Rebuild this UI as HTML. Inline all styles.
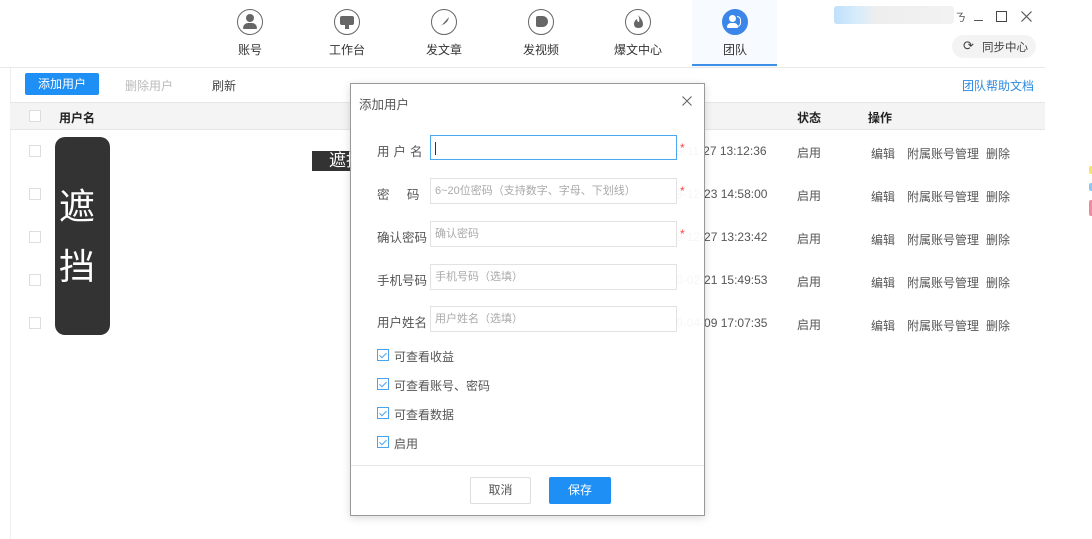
<!DOCTYPE html>
<html><head><meta charset="utf-8"><style>
*{margin:0;padding:0;box-sizing:border-box}
body{width:1092px;height:539px;overflow:hidden;background:#fff;font-family:"Liberation Sans","Noto Sans CJK SC",sans-serif;font-size:12px;color:#555;position:relative}
.a{position:absolute;white-space:nowrap}
.nav{position:absolute;top:0;width:86px;height:67px;text-align:center}
.nav .ic{width:26px;height:26px;border:1.5px solid #666;border-radius:50%;margin:9px auto 0;position:relative}
.nav .lb{margin-top:6px;color:#333;font-size:12px}
.cb{position:absolute;width:12px;height:12px;border:1px solid #ddd;background:#fff}
.row{position:absolute;left:10px;width:1035px;height:43px}
.mcb{position:absolute;width:12px;height:12px;border:1px solid #4aa3ef;background:#fff}
.mcb:after{content:"";position:absolute;left:3px;top:1px;width:3px;height:6px;border:solid #4aa3ef;border-width:0 1px 1px 0;transform:rotate(45deg)}
.inp{position:absolute;left:430px;width:247px;height:26px;border:1px solid #e2e2e2;color:#aaa;font-size:11px;padding:6px 4px;line-height:13px;background:#fff}
.star{position:absolute;left:680px;color:#f44;font-size:12px}
</style></head><body>
<div class="a" style="left:692px;top:0;width:85px;height:67px;background:#f7fbff"></div>
<div class="a" style="left:692px;top:64px;width:85px;height:2px;background:#3d8fe6"></div>
<div class="nav" style="left:207px"><div class="ic"><div class="a" style="left:8px;top:4px;width:8px;height:8px;border-radius:50%;background:#666"></div><div class="a" style="left:5px;top:13px;width:14px;height:6px;border-radius:5px 5px 1px 1px;background:#666"></div></div><div class="lb">账号</div></div>
<div class="nav" style="left:304px"><div class="ic"><div class="a" style="left:5px;top:6px;width:14px;height:9px;border-radius:2px;background:#666"></div><div class="a" style="left:10px;top:15px;width:4px;height:4px;background:#666"></div></div><div class="lb">工作台</div></div>
<div class="nav" style="left:401px"><div class="ic"><svg class="a" style="left:6px;top:5px" width="13" height="13"><path d="M2 12 L11 2 Q10 8 4 10 Z" fill="#666"/></svg></div><div class="lb">发文章</div></div>
<div class="nav" style="left:498px"><div class="ic"><div class="a" style="left:7px;top:6px;width:12px;height:11px;border-radius:2px 6px 6px 2px;background:#666"></div></div><div class="lb">发视频</div></div>
<div class="nav" style="left:595px"><div class="ic"><svg class="a" style="left:6px;top:4px" width="13" height="15"><path d="M6 1 Q11 6 11 10 Q11 14 6.5 14 Q2 14 2 10 Q2 7 5 5 Q5 8 7 8 Q8 5 6 1Z" fill="#666"/></svg></div><div class="lb">爆文中心</div></div>
<div class="nav" style="left:692px"><div class="ic" style="background:#3b86e8;border-color:#3b86e8"><div class="a" style="left:6px;top:5px;width:7px;height:7px;border-radius:50%;background:#fff"></div><div class="a" style="left:4px;top:13px;width:11px;height:5px;border-radius:4px 4px 1px 1px;background:#fff"></div><div class="a" style="left:14px;top:6px;width:4px;height:11px;border:1.5px solid #fff;border-left:none;border-radius:0 4px 4px 0"></div></div><div class="lb">团队</div></div>
<div class="a" style="left:834px;top:6px;width:120px;height:18px;background:linear-gradient(90deg,#bfe0fb 0,#d8ecfb 20%,#eee 35%,#f2f2f2 100%);border-radius:3px"></div>
<div class="a" style="left:955px;top:9px;color:#555;font-size:11px">ㄋ</div>
<div class="a" style="left:974px;top:20px;width:9px;height:1px;background:#555"></div>
<div class="a" style="left:996px;top:11px;width:11px;height:11px;border:1px solid #444"></div>
<svg class="a" style="left:1021px;top:11px" width="11" height="11"><path d="M0.5 0.5L10.5 10.5M10.5 0.5L0.5 10.5" stroke="#555" stroke-width="1.2"/></svg>
<div class="a" style="left:952px;top:35px;width:84px;height:23px;border-radius:12px;background:#f3f3f3"></div>
<div class="a" style="left:963px;top:38px;font-size:13px;color:#444">⟳</div>
<div class="a" style="left:982px;top:39px;color:#444;font-size:11.5px">同步中心</div>
<div class="a" style="left:0;top:67px;width:1045px;height:1px;background:#e8e8e8"></div>
<div class="a" style="left:10px;top:68px;width:1px;height:471px;background:#eee"></div>
<div class="a" style="left:25px;top:73px;width:74px;height:22px;background:#1e8ff5;border-radius:2px;color:#fff;text-align:center;line-height:22px">添加用户</div>
<div class="a" style="left:125px;top:77px;color:#bbb">删除用户</div>
<div class="a" style="left:212px;top:77px;color:#444">刷新</div>
<div class="a" style="left:962px;top:77px;color:#2e8be0">团队帮助文档</div>
<div class="a" style="left:10px;top:102px;width:1035px;height:28px;background:#f4f4f4;border-top:1px solid #e6e6e6;border-bottom:1px solid #e6e6e6"></div>
<div class="cb" style="left:29px;top:110px"></div>
<div class="a" style="left:59px;top:109px;color:#222;font-weight:bold">用户名</div>
<div class="a" style="left:797px;top:109px;color:#222;font-weight:bold">状态</div>
<div class="a" style="left:868px;top:109px;color:#222;font-weight:bold">操作</div>
<div class="cb" style="left:29px;top:145px"></div><div class="a" style="left:656px;top:144px">2019-11-27 13:12:36</div><div class="a" style="left:797px;top:144px">启用</div><div class="a" style="left:871px;top:145px">编辑</div><div class="a" style="left:907px;top:145px">附属账号管理</div><div class="a" style="left:986px;top:145px">删除</div>
<div class="cb" style="left:29px;top:188px"></div><div class="a" style="left:656px;top:187px">2019-12-23 14:58:00</div><div class="a" style="left:797px;top:187px">启用</div><div class="a" style="left:871px;top:188px">编辑</div><div class="a" style="left:907px;top:188px">附属账号管理</div><div class="a" style="left:986px;top:188px">删除</div>
<div class="cb" style="left:29px;top:231px"></div><div class="a" style="left:656px;top:230px">2019-12-27 13:23:42</div><div class="a" style="left:797px;top:230px">启用</div><div class="a" style="left:871px;top:231px">编辑</div><div class="a" style="left:907px;top:231px">附属账号管理</div><div class="a" style="left:986px;top:231px">删除</div>
<div class="cb" style="left:29px;top:274px"></div><div class="a" style="left:656px;top:273px">2020-02-21 15:49:53</div><div class="a" style="left:797px;top:273px">启用</div><div class="a" style="left:871px;top:274px">编辑</div><div class="a" style="left:907px;top:274px">附属账号管理</div><div class="a" style="left:986px;top:274px">删除</div>
<div class="cb" style="left:29px;top:317px"></div><div class="a" style="left:656px;top:316px">2020-04-09 17:07:35</div><div class="a" style="left:797px;top:316px">启用</div><div class="a" style="left:871px;top:317px">编辑</div><div class="a" style="left:907px;top:317px">附属账号管理</div><div class="a" style="left:986px;top:317px">删除</div>
<div class="a" style="left:55px;top:137px;width:55px;height:198px;background:#333;border-radius:10px;color:#fff;font-size:36px;line-height:60px;padding:40px 0 0 4px;white-space:normal">遮<br>挡</div>
<div class="a" style="left:312px;top:151px;width:40px;height:20px;background:#333;color:#fff;font-size:17px;line-height:20px;padding-left:17px;overflow:hidden">遮挡</div>
<div class="a" style="left:1089px;top:166px;width:4px;height:8px;background:#f7e36b;border-radius:2px"></div>
<div class="a" style="left:1089px;top:183px;width:4px;height:8px;background:#8cc8f2;border-radius:2px"></div>
<div class="a" style="left:1089px;top:200px;width:4px;height:16px;background:#f08aa0;border-radius:2px"></div>
<div class="a" style="left:350px;top:83px;width:355px;height:433px;background:rgba(255,255,255,0.95);border:1px solid #999;box-shadow:0 2px 8px rgba(0,0,0,.15)"></div>
<div class="a" style="left:359px;top:94px;color:#555;font-size:12.5px">添加用户</div>
<svg class="a" style="left:682px;top:96px" width="10" height="10"><path d="M0.5 0.5L9.5 9.5M9.5 0.5L0.5 9.5" stroke="#666" stroke-width="1.1"/></svg>
<div class="a" style="left:377px;top:141px;letter-spacing:4px;font-size:12.5px">用户名</div>
<div class="inp" style="top:135px;border-color:#4aa8f0;height:25px"><div style="width:1px;height:13px;background:#333"></div></div><div class="star" style="top:141px">*</div>
<div class="a" style="left:377px;top:184px;font-size:12.5px">密&nbsp;&nbsp;&nbsp;&nbsp;&nbsp;码</div>
<div class="inp" style="top:178px">6~20位密码（支持数字、字母、下划线）</div><div class="star" style="top:184px">*</div>
<div class="a" style="left:377px;top:227px;font-size:12.5px">确认密码</div>
<div class="inp" style="top:221px">确认密码</div><div class="star" style="top:227px">*</div>
<div class="a" style="left:377px;top:270px;font-size:12.5px">手机号码</div>
<div class="inp" style="top:264px">手机号码（选填）</div>
<div class="a" style="left:377px;top:312px;font-size:12.5px">用户姓名</div>
<div class="inp" style="top:306px">用户姓名（选填）</div>
<div class="mcb" style="left:377px;top:349px"></div><div class="a" style="left:394px;top:348px">可查看收益</div>
<div class="mcb" style="left:377px;top:378px"></div><div class="a" style="left:394px;top:377px">可查看账号、密码</div>
<div class="mcb" style="left:377px;top:407px"></div><div class="a" style="left:394px;top:406px">可查看数据</div>
<div class="mcb" style="left:377px;top:436px"></div><div class="a" style="left:394px;top:435px">启用</div>
<div class="a" style="left:351px;top:465px;width:353px;height:1px;background:#e8e8e8"></div>
<div class="a" style="left:470px;top:477px;width:61px;height:27px;border:1px solid #ddd;border-radius:2px;background:#fff;text-align:center;line-height:25px">取消</div>
<div class="a" style="left:549px;top:477px;width:62px;height:27px;background:#1e8ff5;border-radius:2px;color:#fff;text-align:center;line-height:27px">保存</div>
</body></html>
